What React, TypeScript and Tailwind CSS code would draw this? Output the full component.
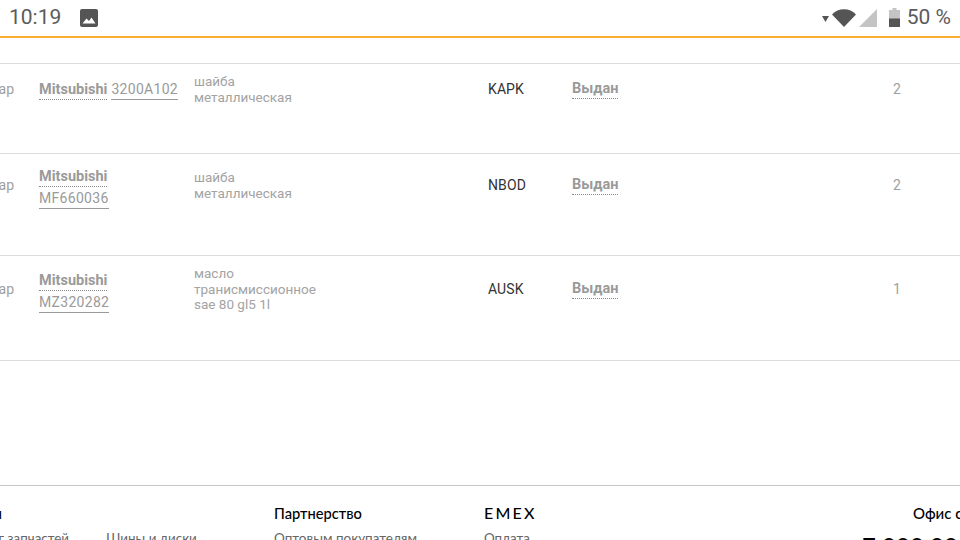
import React from 'react';

interface OrderRow {
  brand: string;
  code: string;
  inline: boolean;
  description: string[];
  supplier: string;
  qty: number;
  heightClass: string;
  brandPt: string;
  descPt: string;
  cellPt: string;
  statusPt: string;
}

const rows: OrderRow[] = [
  { brand: 'Mitsubishi', code: '3200A102', inline: true, description: ['шайба', 'металлическая'], supplier: 'KAPK', qty: 2, heightClass: 'h-[90px]', brandPt: 'pt-[16px]', descPt: 'pt-[10px]', cellPt: 'pt-[17px]', statusPt: 'pt-[14px]' },
  { brand: 'Mitsubishi', code: 'MF660036', inline: false, description: ['шайба', 'металлическая'], supplier: 'NBOD', qty: 2, heightClass: 'h-[102px]', brandPt: 'pt-[13px]', descPt: 'pt-[16px]', cellPt: 'pt-[23px]', statusPt: 'pt-[20px]' },
  { brand: 'Mitsubishi', code: 'MZ320282', inline: false, description: ['масло', 'транисмиссионное', 'sae 80 gl5 1l'], supplier: 'AUSK', qty: 1, heightClass: 'h-[105px]', brandPt: 'pt-[15px]', descPt: 'pt-[10px]', cellPt: 'pt-[25px]', statusPt: 'pt-[22px]' },
];

function StatusBar() {
  return (
    <div className="flex h-[38px] shrink-0 items-center justify-between border-b-2 border-[#f9ae32] pl-[9px] pr-[9px] pb-[1px] text-[#5b5b5b]">
      <div className="flex items-center gap-[19px]">
        <span className="text-[21px] leading-none">10:19</span>
        <svg width="18" height="18" viewBox="0 0 18 18">
          <rect width="18" height="18" rx="2" fill="#555" />
          <path d="M2.5 14.5 L6.5 9.5 L9 12 L11.5 8.5 L15.5 14.5 Z" fill="#fff" />
        </svg>
      </div>
      <div className="flex items-center">
        <svg width="7" height="6" viewBox="0 0 7 6" className="mr-[3px] mt-[2px]">
          <path d="M0 0 H7 L3.5 6 Z" fill="#555" />
        </svg>
        <svg width="24" height="18" viewBox="0 0 24 18" className="mr-[3px]">
          <path d="M0 5.5 C6 -1.5 18 -1.5 24 5.5 L12 18 Z" fill="#555" />
        </svg>
        <svg width="18" height="18" viewBox="0 0 18 18" className="mr-[12px]">
          <path d="M18 0 V18 H0 Z" fill="#c4c4c4" />
        </svg>
        <svg width="11" height="19" viewBox="0 0 11 19" className="mr-[7px]">
          <path d="M3.5 0 H7.5 V2 H11 V19 H0 V2 H3.5 Z" fill="#c4c4c4" />
          <rect y="10.5" width="11" height="8.5" fill="#555" />
        </svg>
        <span className="text-[21px] leading-none">50 %</span>
      </div>
    </div>
  );
}

function Row({ row }: { row: OrderRow }) {
  return (
    <div className={`flex shrink-0 ${row.heightClass} border-b border-[#dcdcdc] text-[14px]`}>
      <div className={`flex w-[39px] justify-end overflow-hidden whitespace-nowrap pr-[25px] ${row.cellPt} leading-[16px] text-[#a0a0a0]`}>
        <span className="shrink-0">Товар</span>
      </div>
      <div className={`w-[155px] ${row.brandPt} text-[#9a9a9a] ${row.inline ? 'flex items-start gap-[4px]' : 'flex flex-col items-start gap-[2px]'}`}>
        <span className="border-b border-dotted border-[#8a8a8a] text-[14.5px] font-bold leading-[19px]">{row.brand}</span>
        <span className="border-b border-[#9a9a9a] leading-[19px] tracking-[0.3px]">{row.code}</span>
      </div>
      <div className={`w-[294px] ${row.descPt} text-[13.5px] leading-[15.5px] text-[#a3a3a3]`}>
        {row.description.map((line) => (
          <div key={line}>{line}</div>
        ))}
      </div>
      <div className={`w-[84px] ${row.cellPt} leading-[16px] tracking-[0.1px] text-[#333]`}>{row.supplier}</div>
      <div className={`w-[321px] ${row.statusPt}`}>
        <span className="inline-block border-b border-dotted border-[#8a8a8a] text-[14.5px] font-bold leading-[19px] text-[#9a9a9a]">Выдан</span>
      </div>
      <div className={`${row.cellPt} leading-[16px] text-[#a0a0a0]`}>{row.qty}</div>
    </div>
  );
}

function Footer() {
  return (
    <div className="flex h-[55px] shrink-0 overflow-hidden whitespace-nowrap border-t border-[#c8c8c8] font-['Lato',sans-serif]">
      <div className="w-[274px] overflow-hidden pt-[17px]">
        <div className="flex w-[2px] justify-end text-[15px] font-medium leading-[20px] text-black">
          <span className="shrink-0">н</span>
        </div>
        <div className="mt-[7px] flex text-[13.4px] leading-[16px] text-[#666]">
          <div className="flex w-[106px] justify-end pr-[37px]">
            <span className="shrink-0">Каталог запчастей</span>
          </div>
          <span>Шины и диски</span>
        </div>
      </div>
      <div className="w-[210px] pt-[17px]">
        <div className="text-[14.7px] font-medium leading-[20px] text-black">Партнерство</div>
        <div className="mt-[7px] text-[13.5px] leading-[16px] text-[#666]">Оптовым покупателям</div>
      </div>
      <div className="w-[378px] pt-[17px]">
        <div className="text-[16px] font-medium leading-[20px] tracking-[2.2px] text-black">EMEX</div>
        <div className="mt-[7px] text-[13.4px] leading-[16px] text-[#666]">Оплата</div>
      </div>
      <div className="flex-1 overflow-hidden pt-[17px]">
        <div className="pl-[51px] text-[15px] font-medium leading-[20px] text-black">Офис обслуживания</div>
        <div className="mt-[8px] text-[24px] leading-[30px] text-black">7 000 000</div>
      </div>
    </div>
  );
}

export default function App() {
  return (
    <div className="flex h-[540px] w-[960px] flex-col overflow-hidden bg-white font-['Roboto',sans-serif]">
      <StatusBar />
      <div className="h-[26px] shrink-0 border-b border-[#dcdcdc]" />
      {rows.map((row) => (
        <Row key={row.code} row={row} />
      ))}
      <div className="h-[124px] shrink-0" />
      <Footer />
    </div>
  );
}
